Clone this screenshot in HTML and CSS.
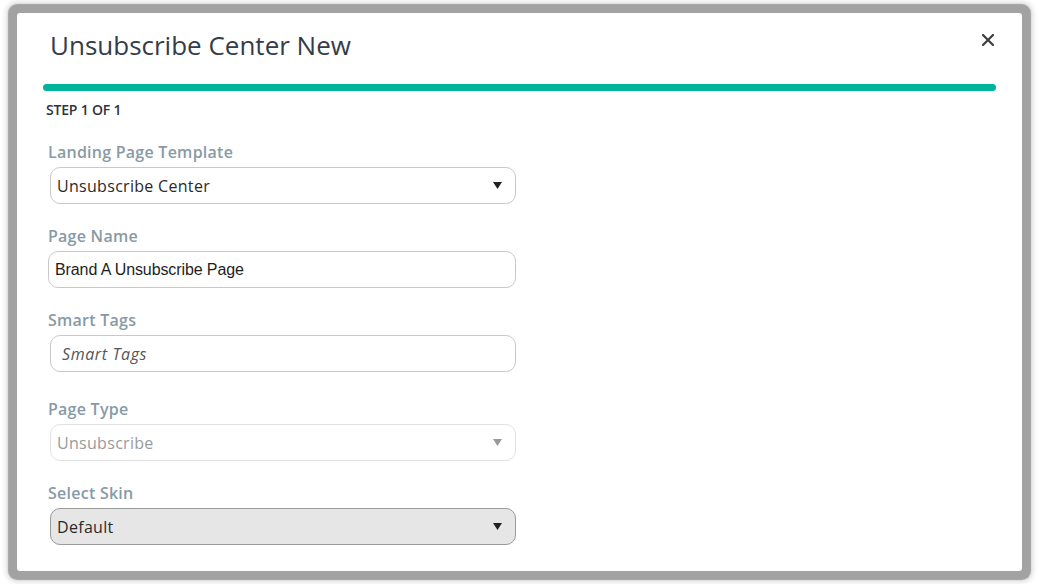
FILE: index.html
```html
<!DOCTYPE html>
<html lang="en">
<head>
<meta charset="utf-8">
<title>Unsubscribe Center New</title>
<link rel="stylesheet" href="styles.css">
</head>
<body>
<div class="dialog">
  <div class="header">
    <h1 class="title">Unsubscribe Center New</h1>
    <button class="close" aria-label="Close">
      <svg width="12" height="12" viewBox="0 0 12 12"><path d="M1 1L11 11M11 1L1 11" stroke="#3d3d3d" stroke-width="2.2" stroke-linecap="round"/></svg>
    </button>
  </div>
  <div class="progress"></div>
  <div class="step">STEP 1 OF 1</div>
  <form class="form">
    <div class="group">
      <label class="label">Landing Page Template</label>
      <div class="field select">
        <span class="value">Unsubscribe Center</span>
        <svg class="arrow" width="9" height="7" viewBox="0 0 9 7"><path d="M0 0H9L4.5 7Z" fill="#222"/></svg>
      </div>
    </div>
    <div class="group">
      <label class="label">Page Name</label>
      <div class="field input wide"><span class="value arial">Brand A Unsubscribe Page</span></div>
    </div>
    <div class="group">
      <label class="label">Smart Tags</label>
      <div class="field input"><span class="placeholder">Smart Tags</span></div>
    </div>
    <div class="group gap-more">
      <label class="label">Page Type</label>
      <div class="field select disabled">
        <span class="value">Unsubscribe</span>
        <svg class="arrow" width="9" height="7" viewBox="0 0 9 7"><path d="M0 0H9L4.5 7Z" fill="#999"/></svg>
      </div>
    </div>
    <div class="group">
      <label class="label">Select Skin</label>
      <div class="field select skin">
        <span class="value">Default</span>
        <svg class="arrow" width="9" height="7" viewBox="0 0 9 7"><path d="M0 0H9L4.5 7Z" fill="#222"/></svg>
      </div>
    </div>
  </form>
</div>
</body>
</html>
```
FILE: styles.css
```css
html, body {
  margin: 0;
  padding: 0;
  background: #ffffff;
}
body {
  font-family: "Open Sans", "Liberation Sans", sans-serif;
  padding: 13px 17px;
  height: 584px;
  box-sizing: border-box;
  overflow: hidden;
}
.dialog {
  background: #ffffff;
  height: 558px;
  box-sizing: border-box;
  border-radius: 3px;
  padding: 0 26px;
  box-shadow: 0 0 1px 9px #a2a2a2, 0 0 6px 10px rgba(0,0,0,0.18);
}
.header {
  display: flex;
  justify-content: space-between;
  align-items: flex-start;
  padding-top: 14px;
}
.title {
  margin: 0 0 0 7px;
  font-size: 26px;
  line-height: 36px;
  font-weight: 500;
  color: #353c47;
  letter-spacing: 0;
}
.close {
  border: 0;
  background: none;
  padding: 0;
  margin: 7px 2px 0 0;
  width: 12px;
  height: 12px;
  display: flex;
}
.progress {
  margin-top: 21px;
  height: 7px;
  border-radius: 4px;
  background: #00b39b;
}
.step {
  margin: 9px 0 0 3px;
  font-size: 14px;
  line-height: 20px;
  font-weight: 600;
  color: #2f333a;
  letter-spacing: -0.2px;
}
.form {
  display: flex;
  flex-direction: column;
  gap: 22px;
  margin: 22px 0 0 5px;
  width: 468px;
}
.gap-more {
  margin-top: 5px;
}
.group {
  display: flex;
  flex-direction: column;
  gap: 5px;
}
.label {
  font-size: 16px;
  line-height: 20px;
  font-weight: 600;
  color: #889aa6;
  letter-spacing: 0.25px;
}
.field {
  height: 37px;
  box-sizing: border-box;
  border: 1px solid #c9c9c9;
  border-radius: 10px;
  display: flex;
  align-items: center;
  justify-content: space-between;
  padding: 0 13px 0 6px;
  margin-left: 2px;
}
.wide {
  margin-left: 0;
}
.value {
  font-size: 16px;
  color: #2a2a2a;
  letter-spacing: 0.3px;
}
.arial {
  font-family: "Liberation Sans", Arial, sans-serif;
  font-size: 16px;
  color: #1e1e1e;
  letter-spacing: -0.1px;
}
.placeholder {
  font-style: italic;
  font-size: 16px;
  color: #555;
  padding-left: 5px;
  letter-spacing: 0.6px;
}
.disabled {
  border-color: #e2e2e2;
}
.disabled .value {
  color: #9a9a9a;
}
.skin {
  background: #e6e6e6;
  border-color: #9a9a9a;
}
```
